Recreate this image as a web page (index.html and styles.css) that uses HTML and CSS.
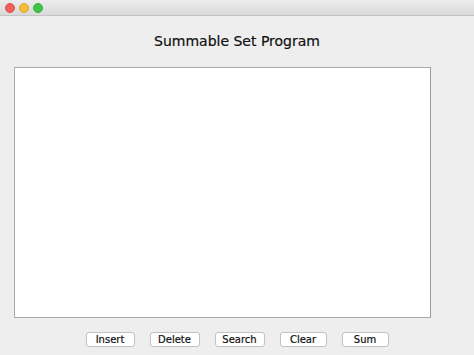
FILE: index.html
```html
<!DOCTYPE html>
<html>
<head>
<meta charset="utf-8">
<link rel="stylesheet" href="styles.css">
</head>
<body>
<div class="window">
  <div class="titlebar">
    <span class="light red"></span>
    <span class="light yellow"></span>
    <span class="light green"></span>
  </div>
  <div class="heading">Summable Set Program</div>
  <div class="textarea"></div>
  <div class="buttons">
    <button class="btn btn-wide">Insert</button>
    <button class="btn btn-wider">Delete</button>
    <button class="btn btn-wider">Search</button>
    <button class="btn">Clear</button>
    <button class="btn">Sum</button>
  </div>
</div>
</body>
</html>
```
FILE: styles.css
```css
html, body {
  margin: 0;
  padding: 0;
}
body {
  width: 474px;
  height: 355px;
  overflow: hidden;
  font-family: "DejaVu Sans", "Liberation Sans", sans-serif;
}
.window {
  width: 474px;
  height: 355px;
  background: #eeeeee;
  display: flex;
  flex-direction: column;
}
.titlebar {
  height: 15px;
  border-bottom: 1px solid #c4c4c4;
  background: linear-gradient(#ececec, #d9d9d9);
  display: flex;
  align-items: center;
  padding-left: 5px;
  gap: 4px;
}
.light {
  width: 10px;
  height: 10px;
  border-radius: 50%;
  box-sizing: border-box;
}
.red { background: #f4605a; border: 1px solid #dc4c45; }
.yellow { background: #f8bd38; border: 1px solid #dea62a; }
.green { background: #3ec645; border: 1px solid #2fae36; }
.heading {
  margin-top: 15px;
  height: 20px;
  line-height: 20px;
  font-size: 14px;
  text-align: center;
  color: #111111;
  -webkit-text-stroke: 0.2px #111111;
}
.textarea {
  margin-top: 16px;
  margin-left: 14px;
  width: 417px;
  height: 251px;
  box-sizing: border-box;
  background: #ffffff;
  border: 1px solid #a9a9a9;
  border-right-color: #9a9a9a;
}
.buttons {
  margin-top: 14px;
  display: flex;
  justify-content: center;
  gap: 15px;
}
.btn {
  width: 47px;
  height: 15px;
  padding: 0;
  background: #ffffff;
  border: 1px solid #c2c2c2;
  border-radius: 3px;
  font-family: "DejaVu Sans", "Liberation Sans", sans-serif;
  font-size: 10px;
  line-height: 13px;
  color: #111111;
  -webkit-text-stroke: 0.2px #111111;
}
.btn-wide { width: 49px; }
.btn-wider { width: 50px; }
```
